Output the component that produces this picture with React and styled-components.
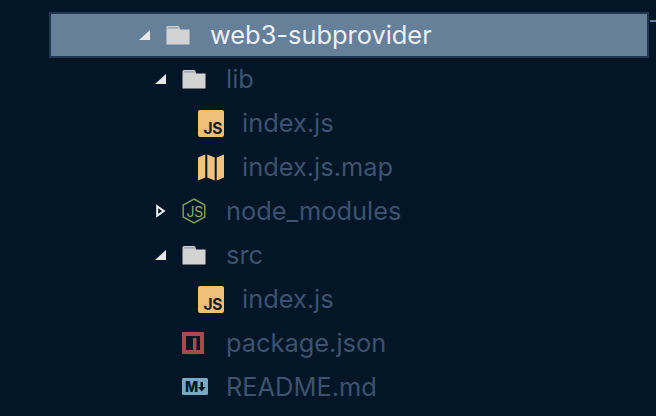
import React from "react";
import styled, { createGlobalStyle } from "styled-components";

const Global = createGlobalStyle`
  html, body { margin: 0; padding: 0; background: #021627; }
  body { width: 656px; height: 416px; overflow: hidden; font-family: Inter, "Open Sans", sans-serif; }
`;

const Page = styled.div`
  position: relative;
  width: 656px;
  height: 416px;
  padding: 13px 8px 0 50px;
  box-sizing: border-box;
  background: #021627;
`;

const Tick = styled.div`
  position: absolute;
  left: 650px;
  top: 20px;
  width: 6px;
  height: 2px;
  background: #5f7d98;
`;

const Row = styled.div`
  display: flex;
  align-items: center;
  height: 44px;
  box-sizing: border-box;
  padding-left: ${p => 89 + p.$depth * 16}px;
  font-size: 25.4px;
  color: #3c536d;
  ${p => p.$selected && `
    background: #67809a;
    outline: 2px solid #1d3950;
    outline-offset: -1px;
    color: #ebf0f4;
  `}
`;

const ArrowSlot = styled.span`
  display: flex;
  width: 27px;
  height: 24px;
  flex: none;
  align-items: center;
`;

const IconSlot = styled.span`
  display: flex;
  width: 44px;
  height: 28px;
  flex: none;
  align-items: center;
`;

const Label = styled.span`
  white-space: nowrap;
  line-height: 44px;
`;

const Open = () => (
  <svg width="12" height="12" viewBox="0 0 12 12"><path d="M11 1V11H0Z" fill="#e8e8e8" /></svg>
);
const Closed = () => (
  <svg width="12" height="14" viewBox="0 0 12 14"><path d="M2.2 2.2L8.800 7 2.2 11.800Z" fill="none" stroke="#eef2f5" strokeWidth="2" /></svg>
);
const Folder = () => (
  <svg width="24" height="20" viewBox="0 0 24 20">
    <path d="M0.500 5V19.500H23.500V4.500H14L13.500 2.500Q13.300 1 12 1H2Q0.500 1 0.500 2.500Z" fill="#d3d3d3" />
    <path d="M1.500 3.500Q1.500 2.200 2.500 2.200H12.500V3.500Z" fill="#8e9aa6" />
  </svg>
);
const Js = () => (
  <svg width="27" height="27" viewBox="0 0 27 27">
    <rect width="26" height="27" rx="2" fill="#efbf7c" />
    <text x="5.500" y="24" fontFamily="Inter, sans-serif" fontWeight="700" fontSize="15.500" letterSpacing="-.3" fill="#1a1c1e">JS</text>
  </svg>
);
const MapIcon = () => (
  <svg width="27" height="27" viewBox="0 0 27 27">
    <path d="M0 3.500L7.300 0.500V23.500L0 26.500ZM9.300 0.500L16.700 3.500V26.500L9.300 23.500ZM18.700 3.500L26 0.500V23.500L18.700 26.500Z" fill="#f2c27f" />
  </svg>
);
const Node = () => (
  <svg width="24" height="26" viewBox="0 0 24 26">
    <path d="M12 1L22.800 7V19L12 25L1.200 19V7Z" fill="none" stroke="#7c9a58" strokeWidth="1.500" />
    <text x="4.500" y="18.500" fontFamily="Inter, sans-serif" fontWeight="400" fontSize="14" letterSpacing="-.2" fill="#8fae6a">JS</text>
  </svg>
);
const Pkg = () => (
  <svg width="23" height="23" viewBox="0 0 23 23">
    <path fillRule="evenodd" d="M0 0H22V22H0ZM4 4V18H18V4Z" fill="#a84a4c" />
    <rect x="11" y="6" width="3.500" height="12" fill="#a84a4c" />
  </svg>
);
const Md = () => (
  <svg width="27" height="18" viewBox="0 0 27 18">
    <rect width="26" height="17" rx="1.500" fill="#76a9c4" />
    <text x="3" y="13.500" fontFamily="Inter, sans-serif" fontWeight="800" fontSize="14" fill="#021627">M</text>
    <path d="M18.500 4H21V9H23.500L19.750 13.500L16 9H18.500Z" fill="#021627" />
  </svg>
);

const items = [
  { depth: 0, arrow: <Open />, icon: <Folder />, name: "web3-subprovider", selected: true },
  { depth: 1, arrow: <Open />, icon: <Folder />, name: "lib" },
  { depth: 2, icon: <Js />, name: "index.js" },
  { depth: 2, icon: <MapIcon />, name: "index.js.map" },
  { depth: 1, arrow: <Closed />, icon: <Node />, name: "node_modules" },
  { depth: 1, arrow: <Open />, icon: <Folder />, name: "src" },
  { depth: 2, icon: <Js />, name: "index.js" },
  { depth: 1, icon: <Pkg />, name: "package.json" },
  { depth: 1, icon: <Md />, name: "README.md" },
];

export default function App() {
  return (
    <Page>
      <Global />
      <Tick />
      {items.map((it, i) => (
        <Row key={i} $depth={it.depth} $selected={it.selected}>
          <ArrowSlot>{it.arrow}</ArrowSlot>
          <IconSlot>{it.icon}</IconSlot>
          <Label>{it.name}</Label>
        </Row>
      ))}
    </Page>
  );
}
